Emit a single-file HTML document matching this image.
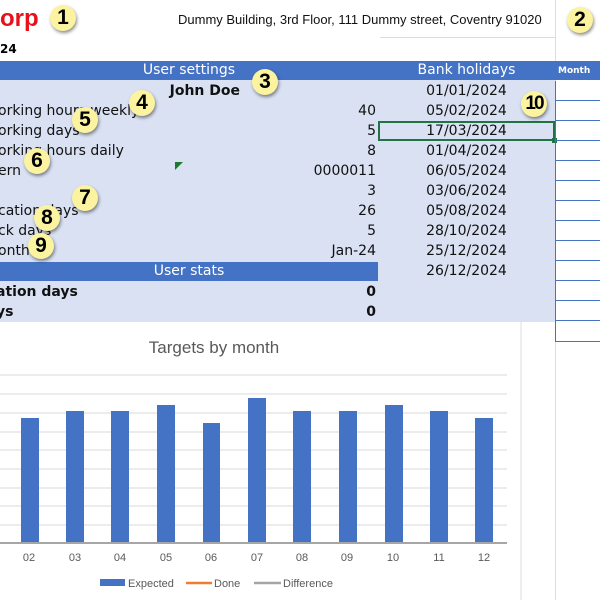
<!DOCTYPE html>
<html><head><style>
body{margin:0;width:600px;height:600px;overflow:hidden;background:#fff;font-family:"DejaVu Sans","Liberation Sans",sans-serif;position:relative}
.a{position:absolute;white-space:nowrap}
.row{position:absolute;left:0;width:378px;height:20px;font-size:14px;line-height:20px;color:#111}
.row .l{position:absolute;left:-2px}
.row .r{position:absolute;right:2px}
.d{position:absolute;left:378px;width:177px;text-align:center;font-size:14px;line-height:20px;height:20px;color:#111;padding-left:0}
.c{position:absolute;width:26px;height:26px;border-radius:50%;background:#fbf3a0;box-shadow:1px 2px 3px rgba(0,0,0,.45);font:bold 21px/26px "Liberation Sans",sans-serif;text-align:center;color:#000}
.mc{position:absolute;left:555px;width:45px;height:19px;border-bottom:1px solid #4472c4;border-left:1px solid #4472c4}
</style></head><body>
<div class="a" style="left:0;top:5px;font:bold 24px 'Liberation Sans',sans-serif;color:#e8101a">orp</div>
<div class="a" style="left:178px;top:12px;font:13px 'Liberation Sans',sans-serif;color:#111">Dummy Building, 3rd Floor, 111 Dummy street, Coventry 91020</div>
<div class="a" style="left:0;top:42px;font-size:12px;font-weight:bold">24</div>
<div class="a" style="left:380px;top:37px;width:175px;border-top:1px solid #ddd"></div>
<div class="a" style="left:555px;top:0;height:600px;border-left:1px solid #ddd"></div>
<div class="a" style="left:0;top:80px;width:555px;height:242px;background:#d9e1f2"></div>
<div class="a" style="left:0;top:61px;width:555px;height:19px;background:#4472c4"></div>
<div class="a" style="left:0;top:61px;width:378px;height:19px;color:#fff;font-size:14px;line-height:19px;text-align:center">User settings</div>
<div class="a" style="left:378px;top:61px;width:177px;height:19px;color:#fff;font-size:14px;line-height:19px;text-align:center">Bank holidays</div>
<div class="a" style="left:0;top:262px;width:378px;height:19px;background:#4472c4;color:#fff;font-size:14px;line-height:19px;text-align:center">User stats</div>
<div class="a" style="left:555px;top:61px;width:45px;height:19px;background:#4472c4;color:#fff;font-size:9px;font-weight:bold;line-height:21px;padding-left:3px">Month</div>
<div class="row" style="top:81px"><span class="r" style="right:138px;font-weight:bold">John Doe</span></div>
<div class="row" style="top:101px"><span class="l">orking hours weekly</span><span class="r">40</span></div>
<div class="row" style="top:121px"><span class="l">orking days</span><span class="r">5</span></div>
<div class="row" style="top:141px"><span class="l">orking hours daily</span><span class="r">8</span></div>
<div class="row" style="top:161px"><span class="l">ern</span><span class="r">0000011</span></div>
<div class="row" style="top:181px"><span class="r">3</span></div>
<div class="row" style="top:201px"><span class="l">cation days</span><span class="r">26</span></div>
<div class="row" style="top:221px"><span class="l">ck days</span><span class="r">5</span></div>
<div class="row" style="top:241px"><span class="l">onth</span><span class="r">Jan-24</span></div>
<div class="row" style="top:282px;font-weight:bold"><span class="l" style="left:-4px">ation days</span><span class="r">0</span></div>
<div class="row" style="top:302px;font-weight:bold"><span class="l" style="left:-4px">ys</span><span class="r">0</span></div>
<div class="a" style="left:175px;top:162px;width:0;height:0;border-top:8px solid #1a7a2a;border-right:8px solid transparent"></div>
<div class="d" style="top:81px">01/01/2024</div>
<div class="d" style="top:101px">05/02/2024</div>
<div class="d" style="top:121px;box-sizing:border-box;border:2px solid #217346;line-height:16px">17/03/2024</div>
<div class="a" style="left:552px;top:138px;width:5px;height:5px;background:#217346"></div>
<div class="d" style="top:141px">01/04/2024</div>
<div class="d" style="top:161px">06/05/2024</div>
<div class="d" style="top:181px">03/06/2024</div>
<div class="d" style="top:201px">05/08/2024</div>
<div class="d" style="top:221px">28/10/2024</div>
<div class="d" style="top:241px">25/12/2024</div>
<div class="d" style="top:261px">26/12/2024</div>
<div class="mc" style="top:81px"></div><div class="mc" style="top:101px"></div><div class="mc" style="top:121px"></div><div class="mc" style="top:141px"></div><div class="mc" style="top:161px"></div><div class="mc" style="top:181px"></div><div class="mc" style="top:201px"></div><div class="mc" style="top:221px"></div><div class="mc" style="top:241px"></div><div class="mc" style="top:261px"></div><div class="mc" style="top:281px"></div><div class="mc" style="top:301px"></div><div class="mc" style="top:321px;height:20px"></div>
<svg class="a" style="left:0;top:322px" width="600" height="278">
<rect x="0" y="0" width="521" height="278" fill="#fff"/>
<line x1="521" y1="0" x2="521" y2="278" stroke="#ddd"/>
<g stroke="#d9d9d9" stroke-width="1">
<line x1="0" y1="53" x2="507" y2="53"/><line x1="0" y1="72" x2="507" y2="72"/><line x1="0" y1="91" x2="507" y2="91"/><line x1="0" y1="110" x2="507" y2="110"/><line x1="0" y1="128" x2="507" y2="128"/><line x1="0" y1="147" x2="507" y2="147"/><line x1="0" y1="166" x2="507" y2="166"/><line x1="0" y1="184" x2="507" y2="184"/><line x1="0" y1="203" x2="507" y2="203"/>
</g>
<g fill="#4472c4">
<rect x="21" y="96" width="18" height="125"/><rect x="66" y="89" width="18" height="132"/><rect x="111" y="89" width="18" height="132"/><rect x="157" y="83" width="18" height="138"/><rect x="203" y="101" width="17" height="120"/><rect x="248" y="76" width="18" height="145"/><rect x="293" y="89" width="18" height="132"/><rect x="339" y="89" width="18" height="132"/><rect x="385" y="83" width="18" height="138"/><rect x="430" y="89" width="18" height="132"/><rect x="475" y="96" width="18" height="125"/>
</g>
<line x1="0" y1="221" x2="507" y2="221" stroke="#a6a6a6" stroke-width="2"/>
<g font-family="Liberation Sans,sans-serif" font-size="11" fill="#595959" text-anchor="middle">
<text x="29" y="239">02</text><text x="75" y="239">03</text><text x="120" y="239">04</text><text x="166" y="239">05</text><text x="211" y="239">06</text><text x="257" y="239">07</text><text x="302" y="239">08</text><text x="347" y="239">09</text><text x="393" y="239">10</text><text x="439" y="239">11</text><text x="484" y="239">12</text>
<text x="214" y="31" font-size="17">Targets by month</text>
</g>
<rect x="100" y="257" width="25" height="7" fill="#4472c4"/>
<line x1="186" y1="261" x2="212" y2="261" stroke="#ed7d31" stroke-width="2.5"/>
<line x1="254" y1="261" x2="281" y2="261" stroke="#a5a5a5" stroke-width="2.5"/>
<g font-family="Liberation Sans,sans-serif" font-size="11" fill="#595959">
<text x="128" y="265">Expected</text><text x="214" y="265">Done</text><text x="283" y="265">Difference</text></g>
</svg>
<div class="c" style="left:50px;top:5px">1</div>
<div class="c" style="left:567px;top:7px">2</div>
<div class="c" style="left:252px;top:69px">3</div>
<div class="c" style="left:129px;top:90px">4</div>
<div class="c" style="left:72px;top:107px">5</div>
<div class="c" style="left:24px;top:148px">6</div>
<div class="c" style="left:72px;top:185px">7</div>
<div class="c" style="left:34px;top:205px">8</div>
<div class="c" style="left:28px;top:233px">9</div>
<div class="c" style="left:521px;top:91px;font-size:19px;letter-spacing:-2px">10</div>
</body></html>
